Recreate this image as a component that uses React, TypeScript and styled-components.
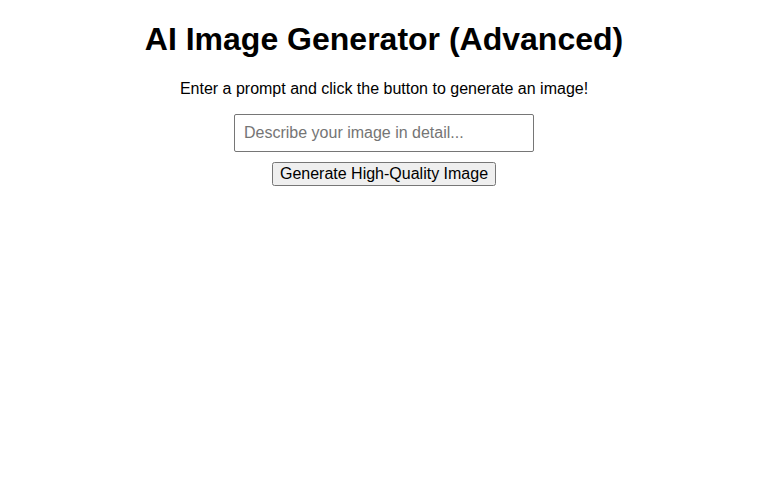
import React from "react";
import styled, { createGlobalStyle } from "styled-components";

const Global = createGlobalStyle`
  body {
    margin: 0;
    background: #ffffff;
    font-family: "Liberation Sans", Arial, sans-serif;
    color: #000;
  }
`;

const Page = styled.main`
  text-align: center;
  padding: 0 8px;
`;

const Title = styled.h1`
  font-size: 32px;
  font-weight: bold;
  margin: 21.44px 0;
`;

const Intro = styled.p`
  font-size: 16px;
  margin: 16px 0;
`;

const Controls = styled.div`
  display: flex;
  flex-direction: column;
  align-items: center;
  gap: 10px;
`;

const PromptInput = styled.input`
  width: 300px;
  box-sizing: border-box;
  padding: 9px;
  font-size: 16px;
  font-family: "Liberation Sans", Arial, sans-serif;
  border: 1px solid #767676;
  border-radius: 2px;
  &::placeholder {
    color: #757575;
  }
`;

const GenerateButton = styled.button`
  font-size: 16px;
  font-family: "Liberation Sans", Arial, sans-serif;
`;

export default function App() {
  return (
    <>
      <Global />
      <Page>
        <Title>AI Image Generator (Advanced)</Title>
        <Intro>Enter a prompt and click the button to generate an image!</Intro>
        <Controls>
          <PromptInput type="text" placeholder="Describe your image in detail..." />
          <GenerateButton>Generate High-Quality Image</GenerateButton>
        </Controls>
      </Page>
    </>
  );
}
